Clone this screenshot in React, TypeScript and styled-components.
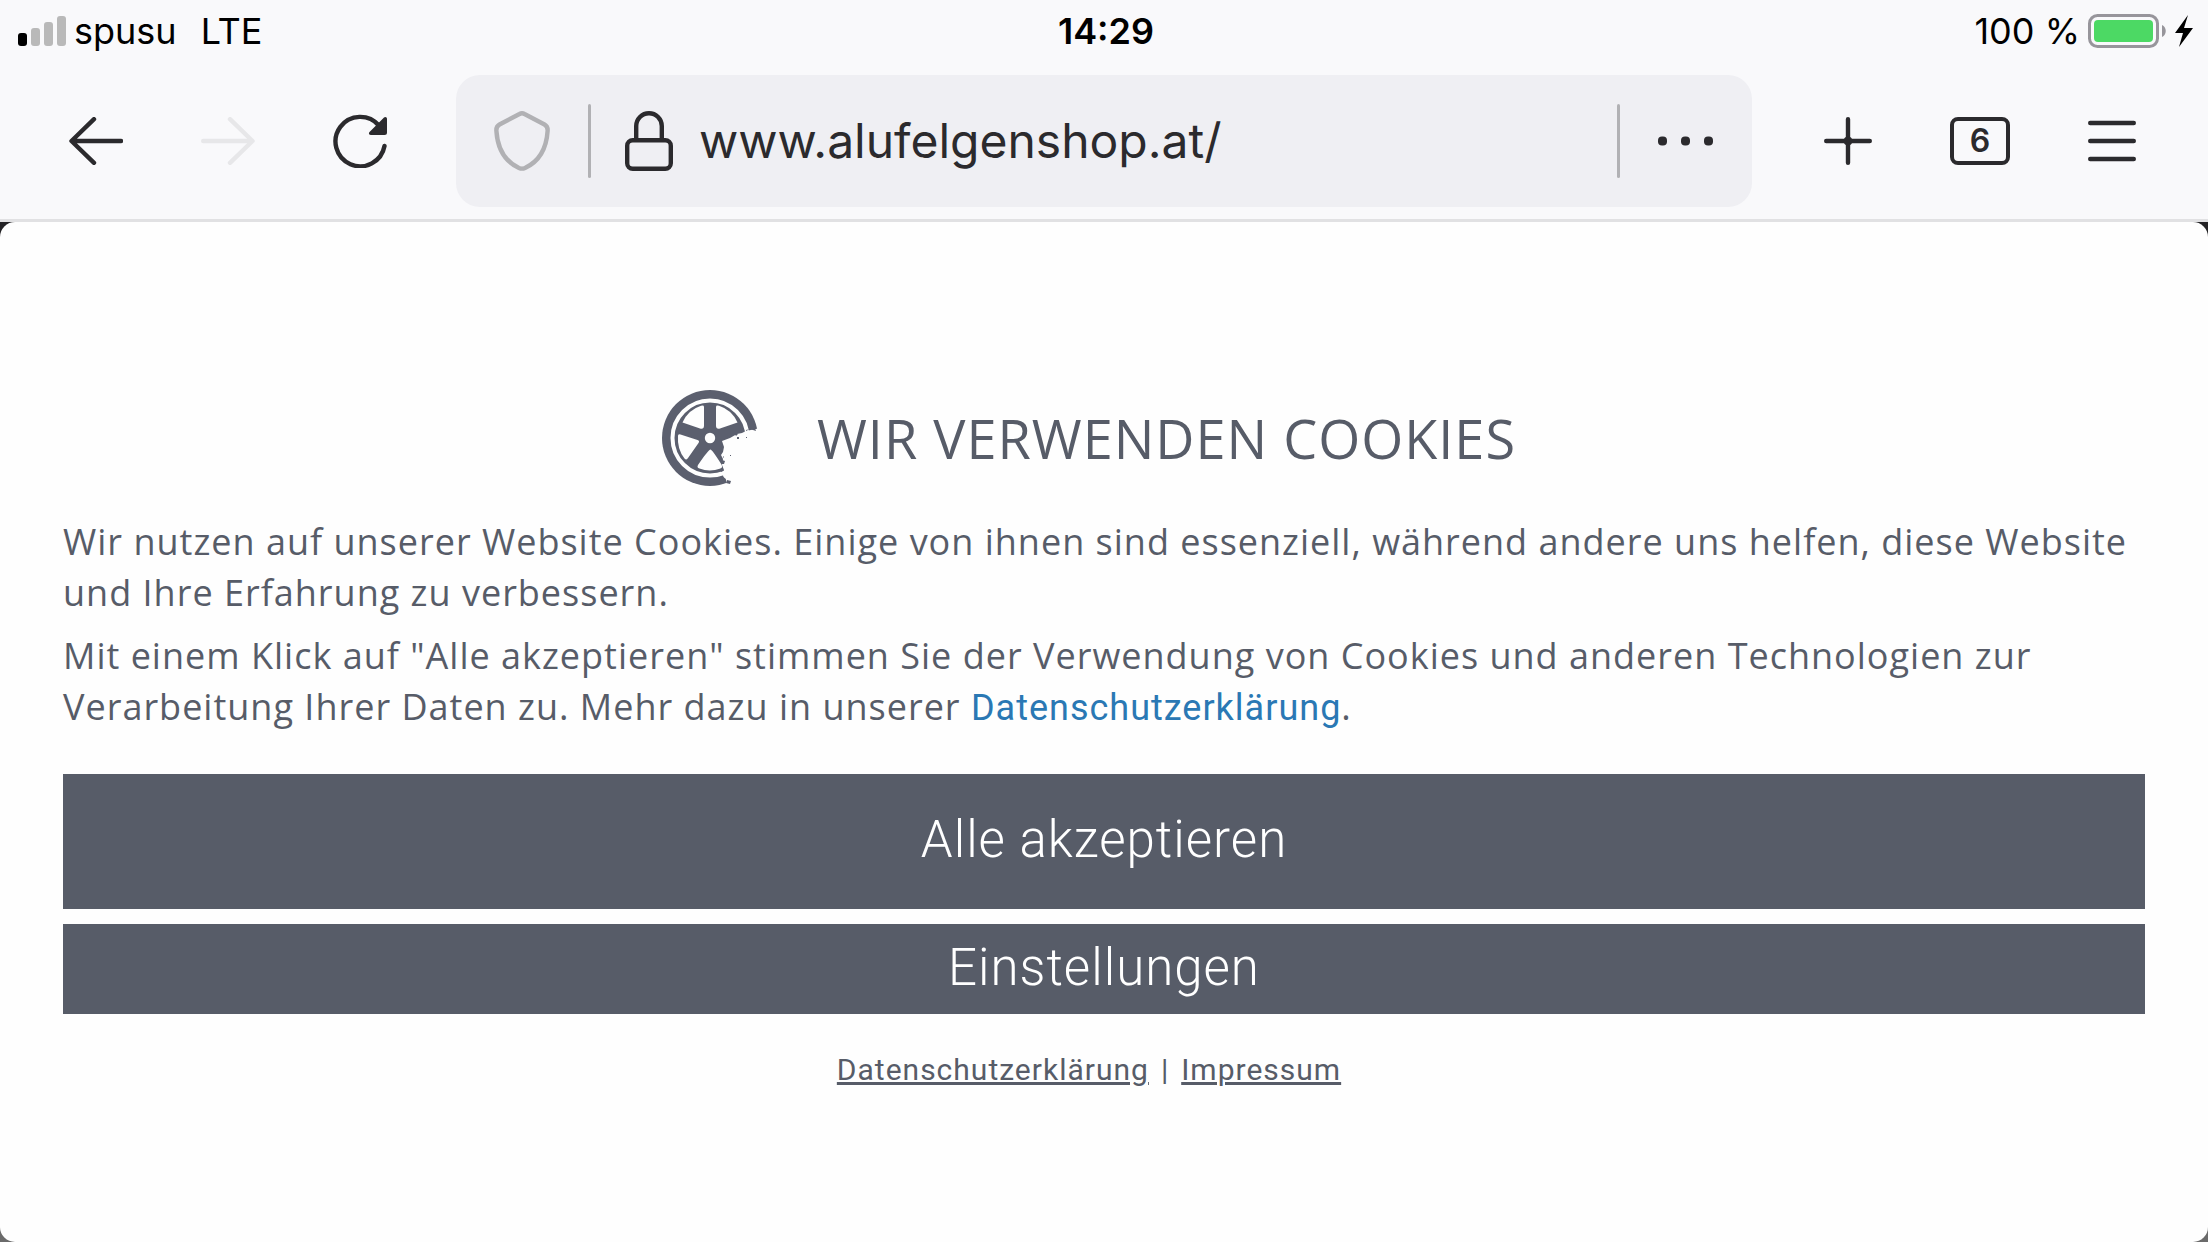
import React from "react";
import styled, { createGlobalStyle } from "styled-components";

const ink = "#2b2a2d";
const slate = "#575c68";

const GlobalStyle = createGlobalStyle`
  html, body, #root { height: 100%; }
  body { margin: 0; background: #2b2a2d; font-family: Inter, "Liberation Sans", sans-serif; }
  *, *::before, *::after { box-sizing: border-box; }
  button, input { font: inherit; color: inherit; letter-spacing: inherit; }
`;

const Screen = styled.div`
  min-height: 100%;
  display: flex;
  flex-direction: column;
  background: linear-gradient(#232225 60%, #6b6b6b);
`;

const Chrome = styled.header`
  background: #f9f9fb;
  border-bottom: 3px solid #e1e1e3;
`;

const StatusBar = styled.div`
  display: grid;
  grid-template-columns: 1fr auto 1fr;
  align-items: center;
  height: 63px;
  padding: 0 14px 2px 18px;
  font-size: 36px;
  line-height: 44px;
  color: #000;
`;

const StatusGroup = styled.div<{ $end?: boolean }>`
  display: flex;
  align-items: center;
  justify-content: ${(p) => (p.$end ? "flex-end" : "flex-start")};
  gap: 8px;
`;

const Network = styled.span`
  margin-left: 16px;
`;

const Clock = styled.time`
  font-weight: 600;
`;

const Toolbar = styled.nav`
  display: flex;
  align-items: center;
  padding: 12px 30px;
`;

const IconButton = styled.button`
  display: flex;
  align-items: center;
  justify-content: center;
  flex: none;
  width: 132px;
  height: 132px;
  padding: 0;
  border: 0;
  background: none;
  color: ${ink};
  &:disabled { color: #e7e7e9; }
`;

const AddressBar = styled.div`
  display: flex;
  align-items: center;
  flex: 1;
  min-width: 0;
  height: 132px;
  margin: 0 30px;
  background: #efeff3;
  border-radius: 24px;
`;

const Divider = styled.span`
  flex: none;
  width: 3px;
  height: 74px;
  border-radius: 2px;
  background: #b1b1b4;
`;

const ShieldButton = styled(IconButton)`
  color: #b1b1b4;
`;

const LockButton = styled(IconButton)`
  width: 108px;
  padding-left: 8px;
`;

const UrlInput = styled.input`
  flex: 1;
  min-width: 0;
  padding: 0;
  border: 0;
  outline: 0;
  background: none;
  font-size: 48px;
  line-height: 60px;
  color: ${ink};
`;

const TabCount = styled.span`
  display: flex;
  align-items: center;
  justify-content: center;
  width: 60px;
  height: 48px;
  border: 4px solid ${ink};
  border-radius: 8px;
  font-size: 32px;
  font-weight: 600;
  line-height: 40px;
`;

const Dialog = styled.main`
  flex: 1;
  padding: 168px 63px 120px;
  background: #fefefe;
  border-radius: 15px;
  color: ${slate};
  font-family: "Open Sans", "Liberation Sans", sans-serif;
  letter-spacing: 1px;
`;

const Heading = styled.div`
  display: flex;
  align-items: center;
  justify-content: center;
  gap: 59px;
  margin-bottom: 30px;
  padding-right: 30px;
`;

const Title = styled.h1`
  margin: 0;
  font-size: 54px;
  font-weight: 400;
  line-height: 74px;
`;

const Paragraph = styled.p`
  margin: 0 0 12px;
  font-size: 36px;
  line-height: 51px;
`;

const TextLink = styled.a`
  color: #2a78b4;
  font-family: Roboto, "Liberation Sans", sans-serif;
  text-decoration: none;
`;

const Actions = styled.div`
  display: grid;
  gap: 15px;
  margin-top: 40px;
`;

const ActionButton = styled.button<{ $primary?: boolean }>`
  height: ${(p) => (p.$primary ? 135 : 90)}px;
  padding: 0 0 3px;
  border: 0;
  background: ${slate};
  color: #fff;
  font-family: Roboto, "Liberation Sans", sans-serif;
  font-size: 51px;
  font-weight: 300;
  line-height: 60px;
`;

const LegalLinks = styled.footer`
  display: flex;
  justify-content: center;
  gap: 12px;
  margin-top: 36px;
  padding-right: 30px;
  font-family: Roboto, "Liberation Sans", sans-serif;
  font-size: 30px;
  line-height: 40px;
`;

const LegalLink = styled.a`
  color: inherit;
  text-decoration: underline;
`;

const SignalIcon = () => (
  <svg width="48" height="30" viewBox="0 0 48 30" aria-hidden="true">
    <rect x="0" y="17" width="9" height="13" rx="3" fill="#000" />
    <rect x="13" y="12" width="9" height="18" rx="3" fill="#b9b9b9" />
    <rect x="26" y="6" width="9" height="24" rx="3" fill="#b9b9b9" />
    <rect x="39" y="0" width="9" height="30" rx="3" fill="#b9b9b9" />
  </svg>
);

const BatteryIcon = () => (
  <svg width="106" height="34" viewBox="0 0 106 34" aria-hidden="true">
    <rect x="1.5" y="1.5" width="68" height="31" rx="8" fill="none" stroke="#97959b" strokeWidth="3" />
    <rect x="6" y="6" width="59" height="22" rx="4" fill="#4cd964" />
    <path d="M74 11c5 2 5 10 0 12z" fill="#97959b" />
    <path d="M100 1 87 19h8l-4 14 14-19h-9z" fill="#000" />
  </svg>
);

const ArrowIcon = ({ flip }: { flip?: boolean }) => (
  <svg width="54" height="48" viewBox="0 0 54 48" fill="none" stroke="currentColor" strokeWidth="4.4" strokeLinecap="round" strokeLinejoin="round" aria-hidden="true">
    <path d={flip ? "M2.2 24h49M29 2.2 51.5 24 29 45.8" : "M52 24H3M25 2.2 2.5 24 25 45.8"} />
  </svg>
);

const ReloadIcon = () => (
  <svg width="54" height="54" viewBox="0 0 54 54" aria-hidden="true">
    <path d="M51.500 32A24.700 24.700 0 1 1 46 11.500" fill="none" stroke="currentColor" strokeWidth="4.400" strokeLinecap="round" />
    <path d="M51 3.600c1.200-1.200 3-.5 3 1.300V18.500a2.500 2.500 0 0 1-2.500 2.500H38c-2 0-2.700-1.800-1.500-3z" fill="currentColor" />
  </svg>
);

const ShieldIcon = () => (
  <svg width="56" height="60" viewBox="0 0 56 60" fill="none" stroke="currentColor" strokeWidth="4.400" strokeLinejoin="round" aria-hidden="true">
    <path d="M25.500 3q2.500-1.500 5 0L50.500 13.500Q54 15.500 53.600 20C52.500 37 46 50 31 57q-3 1.300-6 0C10 50 3.500 37 2.400 20Q2 15.500 5.500 13.500z" />
  </svg>
);

const LockIcon = () => (
  <svg width="48" height="60" viewBox="0 0 48 60" fill="none" stroke="currentColor" strokeWidth="4.400" aria-hidden="true">
    <rect x="2.200" y="29.200" width="43.600" height="28.600" rx="5.500" />
    <path d="M11.200 29V15a12.800 12.800 0 0 1 25.600 0v14" />
  </svg>
);

const DotsIcon = () => (
  <svg width="56" height="10" viewBox="0 0 56 10" fill="currentColor" aria-hidden="true">
    <rect x="0" y="0.500" width="9" height="9" rx="4" />
    <rect x="23" y="0.500" width="9" height="9" rx="4" />
    <rect x="46" y="0.500" width="9" height="9" rx="4" />
  </svg>
);

const PlusIcon = () => (
  <svg width="48" height="48" viewBox="0 0 48 48" stroke="currentColor" strokeWidth="4.400" strokeLinecap="round" aria-hidden="true">
    <path d="M24 2.200v43.600M2.200 24h43.600" />
    <circle cx="24" cy="24" r="3" fill="currentColor" strokeWidth="3" />
  </svg>
);

const MenuIcon = () => (
  <svg width="48" height="42" viewBox="0 0 48 42" stroke="currentColor" strokeWidth="4.400" strokeLinecap="round" aria-hidden="true">
    <path d="M2.200 3h43.600M2.200 21h43.600M2.200 39h43.600" />
  </svg>
);

const WheelIcon = () => (
  <svg width="96" height="96" viewBox="0 0 96 96" aria-hidden="true">
    <g fill="#5b5f6e">
      <circle cx="48" cy="48" r="48" />
      <circle cx="48" cy="48" r="37.500" fill="none" stroke="#fefefe" strokeWidth="4" />
      <g fill="#fefefe">
        <path d="M42 17v18.500q0 4-4 3L20.500 32.500Q26 20 39 15.800q3-.8 3 1.200z" />
        <path d="M54 17v18.500q0 4 4 3L75.500 32.500Q70 20 57 15.800q-3-.8-3 1.200z" />
        <path d="M16 46q0-2.500 2.500-1.500l17 5.500q2.500 1 1 3L26 68q-1.500 2.500-3.500.5Q15 59 16 46z" />
        <path d="M48.500 59.500q1.500 0 11 15 1.500 3-1 4-11 4-21 0-3-1-1.500-3.500 10.500-15.500 12.500-15.500z" />
        <circle cx="48" cy="48" r="5.200" />
      </g>
      <path d="M98 38 84 41l-4 2-5 1-7 4-8 3 2 6-1 5-2 3 2 4-1 6 2 5-1 6 3 4 1 7h40V36z" fill="#fefefe" />
      <path d="M84 41l4-2 6 2-1-3-9 2zM75 47l2 0 0 2-2 0zM72 43l4 1-2 2zM60 70l3 1-1 3-2 0zM59 78l2 1-1 3-2-1zM62 88l2 1-1 2-2-1zM65 90l4 1-1 3-4-1zM84 47l1 0 0 1-1 0zM61 66l1 1-1 1zM68 65l1 0 0 1-1 0z" />
    </g>
  </svg>
);

export default function App() {
  return (
    <Screen>
      <GlobalStyle />
      <Chrome>
        <StatusBar>
          <StatusGroup>
            <SignalIcon />
            <span>spusu</span>
            <Network>LTE</Network>
          </StatusGroup>
          <Clock>14:29</Clock>
          <StatusGroup $end>
            <span>100 %</span>
            <BatteryIcon />
          </StatusGroup>
        </StatusBar>
        <Toolbar aria-label="Browser">
          <IconButton aria-label="Zurück"><ArrowIcon /></IconButton>
          <IconButton aria-label="Vorwärts" disabled><ArrowIcon flip /></IconButton>
          <IconButton aria-label="Neu laden"><ReloadIcon /></IconButton>
          <AddressBar>
            <ShieldButton aria-label="Schutz"><ShieldIcon /></ShieldButton>
            <Divider />
            <LockButton aria-label="Verbindung"><LockIcon /></LockButton>
            <UrlInput aria-label="Adresse" defaultValue="www.alufelgenshop.at/" />
            <Divider />
            <IconButton aria-label="Seitenaktionen"><DotsIcon /></IconButton>
          </AddressBar>
          <IconButton aria-label="Neuer Tab"><PlusIcon /></IconButton>
          <IconButton aria-label="Tabs"><TabCount>6</TabCount></IconButton>
          <IconButton aria-label="Menü"><MenuIcon /></IconButton>
        </Toolbar>
      </Chrome>
      <Dialog>
        <Heading>
          <WheelIcon />
          <Title>WIR VERWENDEN COOKIES</Title>
        </Heading>
        <Paragraph>
          Wir nutzen auf unserer Website Cookies. Einige von ihnen sind essenziell, während andere uns helfen, diese Website und Ihre Erfahrung zu verbessern.
        </Paragraph>
        <Paragraph>
          Mit einem Klick auf "Alle akzeptieren" stimmen Sie der Verwendung von Cookies und anderen Technologien zur Verarbeitung Ihrer Daten zu. Mehr dazu in unserer <TextLink href="#datenschutz">Datenschutzerklärung</TextLink>.
        </Paragraph>
        <Actions>
          <ActionButton $primary>Alle akzeptieren</ActionButton>
          <ActionButton>Einstellungen</ActionButton>
        </Actions>
        <LegalLinks>
          <LegalLink href="#datenschutz">Datenschutzerklärung</LegalLink>
          <span>|</span>
          <LegalLink href="#impressum">Impressum</LegalLink>
        </LegalLinks>
      </Dialog>
    </Screen>
  );
}
